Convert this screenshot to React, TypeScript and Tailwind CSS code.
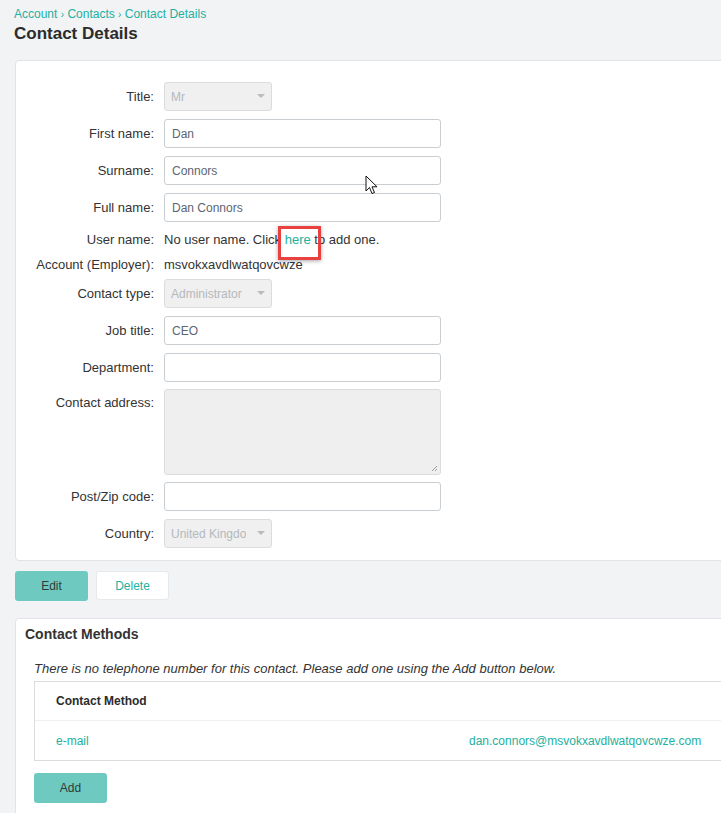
import React from 'react'

const Label = ({ children, top }: { children: React.ReactNode; top?: boolean }) => (
  <div className={`w-[148px] shrink-0 text-right pr-[10px] text-[13px] text-[#333] ${top ? 'self-start pt-[4px]' : ''}`}>
    {children}
  </div>
)

const Caret = () => (
  <svg width="8" height="5" viewBox="0 0 8 5" className="shrink-0">
    <path d="M0 0 L8 0 L4 4 Z" fill="#b8bcc0" />
  </svg>
)

const Select = ({ value }: { value: string }) => (
  <div className="flex h-[29px] w-[108px] items-center justify-between rounded-[3px] border border-[#dcdcdc] bg-[#f0f0f0] pl-[6px] pr-[6px] text-[12px] text-[#b4b8bc]">
    <span className="overflow-hidden whitespace-nowrap">{value}</span>
    <Caret />
  </div>
)

const Input = ({ value }: { value?: string }) => (
  <div className="flex h-[29px] w-[277px] items-center rounded-[3px] border border-[#c9ced3] bg-white px-[7px] text-[12px] text-[#5c6670]">
    {value}
  </div>
)

const Cursor = () => (
  <svg width="13" height="20" viewBox="0 0 13 20" className="absolute left-[365px] top-[175px]">
    <path d="M1 1 L1 16 L4.5 12.5 L7 18.5 L9.5 17.5 L7 11.8 L12 11.8 Z" fill="#fff" stroke="#111" strokeWidth="1" strokeLinejoin="round" />
  </svg>
)

const App = () => {
  return (
    <div className="relative h-[813px] w-[721px] overflow-hidden bg-[#f2f3f5] font-['Liberation_Sans',Arial,sans-serif] text-[#333]">
      <div className="px-[14px] pt-[5px]">
        <div className="text-[12px] text-[#22b0a0]">
          Account <span className="text-[10px]">›</span> Contacts <span className="text-[10px]">›</span> Contact Details
        </div>
        <h1 className="text-[17px] font-bold leading-[22px] text-[#2b2b2b]">Contact Details</h1>
      </div>

      <div className="ml-[15px] mt-[15px] w-[740px] rounded-[4px] border border-[#e1e3e6] bg-white pb-[12px] pt-[21px]">
        <div className="flex items-center">
          <Label>Title:</Label>
          <Select value="Mr" />
        </div>
        <div className="mt-[8px] flex items-center">
          <Label>First name:</Label>
          <Input value="Dan" />
        </div>
        <div className="mt-[8px] flex items-center">
          <Label>Surname:</Label>
          <Input value="Connors" />
        </div>
        <div className="mt-[8px] flex items-center">
          <Label>Full name:</Label>
          <Input value="Dan Connors" />
        </div>
        <div className="mt-[8px] flex h-[20px] items-center">
          <Label>User name:</Label>
          <div className="text-[13px] text-[#333]">
            No user name. Click{' '}
            <span className="relative text-[#22b0a0]">
              here
              <span className="absolute left-[-7px] top-[-6px] h-[34px] w-[43px] border-[3px] border-[#e8413f] shadow-[0_1px_4px_rgba(0,0,0,0.35)]" />
            </span>{' '}
            to add one.
          </div>
        </div>
        <div className="mt-[5px] flex h-[20px] items-center">
          <Label>Account (Employer):</Label>
          <div className="text-[13px] text-[#333]">msvokxavdlwatqovcwze</div>
        </div>
        <div className="mt-[4px] flex items-center">
          <Label>Contact type:</Label>
          <Select value="Administrator" />
        </div>
        <div className="mt-[8px] flex items-center">
          <Label>Job title:</Label>
          <Input value="CEO" />
        </div>
        <div className="mt-[8px] flex items-center">
          <Label>Department:</Label>
          <Input />
        </div>
        <div className="mt-[7px] flex items-start">
          <Label top>Contact address:</Label>
          <div className="relative h-[86px] w-[277px] rounded-[3px] border border-[#dcdcdc] bg-[#efefef]">
            <svg width="7" height="7" viewBox="0 0 7 7" className="absolute bottom-[2px] right-[2px]">
              <path d="M1 6 L6 1 M4 6 L6 4" stroke="#888" strokeWidth="0.8" />
            </svg>
          </div>
        </div>
        <div className="mt-[7px] flex items-center">
          <Label>Post/Zip code:</Label>
          <Input />
        </div>
        <div className="mt-[8px] flex items-center">
          <Label>Country:</Label>
          <Select value="United Kingdo" />
        </div>
      </div>

      <div className="ml-[15px] mt-[10px] flex gap-[8px]">
        <button className="h-[30px] w-[73px] rounded-[3px] bg-[#6ecac0] text-[12px] text-[#2f3a3a]">Edit</button>
        <button className="h-[29px] w-[73px] rounded-[3px] border border-[#e6e8ea] bg-white text-[12px] text-[#22b0a0]">Delete</button>
      </div>

      <div className="ml-[15px] mt-[17px] w-[760px] rounded-[4px] border border-[#e1e3e6] bg-white pb-[16px] pl-[18px] pt-[6px]">
        <h2 className="-ml-[9px] text-[14px] font-bold leading-[18px] text-[#333]">Contact Methods</h2>
        <p className="mt-[18px] text-[13px] italic leading-[16px] text-[#333]">
          There is no telephone number for this contact. Please add one using the Add button below.
        </p>
        <div className="mt-[4px] w-[710px] border border-[#dcdcdc]">
          <div className="flex h-[39px] items-center border-b border-[#f0f0f0] pl-[21px] text-[12px] font-bold text-[#2b2b2b]">
            Contact Method
          </div>
          <div className="flex h-[39px] items-center pl-[21px] text-[12px] text-[#22b0a0]">
            <span className="w-[413px] shrink-0">e-mail</span>
            <span className="whitespace-nowrap">dan.connors@msvokxavdlwatqovcwze.com</span>
          </div>
        </div>
        <button className="mt-[12px] h-[30px] w-[73px] rounded-[3px] bg-[#6ecac0] text-[12px] text-[#2f3a3a]">Add</button>
      </div>

      <Cursor />
    </div>
  )
}

export default App
